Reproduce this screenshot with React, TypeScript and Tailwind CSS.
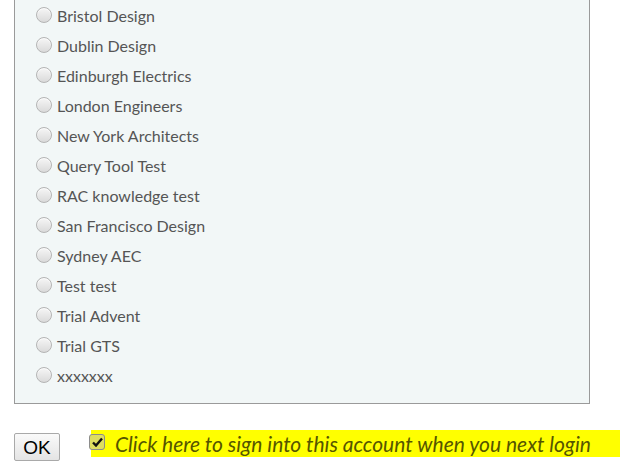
import React from "react";

const items = [
  "Bristol Design",
  "Dublin Design",
  "Edinburgh Electrics",
  "London Engineers",
  "New York Architects",
  "Query Tool Test",
  "RAC knowledge test",
  "San Francisco Design",
  "Sydney AEC",
  "Test test",
  "Trial Advent",
  "Trial GTS",
  "xxxxxxx",
];

function Radio() {
  return (
    <span className="block w-[16px] h-[16px] rounded-full border border-[#b4b4b4] bg-gradient-to-b from-[#f6f6f6] to-[#dadada] shadow-[inset_0_1px_1px_rgba(255,255,255,0.8)]" />
  );
}

export default function App() {
  return (
    <div className="w-[637px] h-[476px] bg-white overflow-hidden" style={{ fontFamily: "Lato, 'Open Sans', sans-serif" }}>
      <div className="ml-[14px] w-[576px] -mt-[20px] border border-[#9a9a9a] bg-[#f2f7f7] pt-[20px] pb-[12px] pl-[21px]">
        {items.map((t) => (
          <div key={t} className="h-[30px] flex items-center gap-[5px]">
            <span className="-mt-[2px]"><Radio /></span>
            <span className="text-[16px] text-[#555]">{t}</span>
          </div>
        ))}
      </div>
      <div className="mt-[25px] flex items-start">
        <button className="ml-[14px] mt-[4px] w-[46px] h-[28px] border border-[#a9a9a9] rounded-[2px] bg-gradient-to-b from-[#fafafa] to-[#e4e4e4] text-[19px] text-black leading-none" style={{ fontFamily: "'Liberation Sans', Arial, sans-serif" }}>
          OK
        </button>
        <div className="relative z-10 ml-[29px] mt-[5px] w-[16px] h-[16px] rounded-[3px] border border-[#8c8c8c] bg-[#dede60] flex items-center justify-center">
          <svg width="11" height="10" viewBox="0 0 11 10">
            <path d="M1 5.5 L4 8.5 L10 1.5" stroke="#111" strokeWidth="2.4" fill="none" />
          </svg>
        </div>
        <div className="-ml-[14px] mt-[1px] pl-[24px] w-[529px] h-[27px] bg-[#ffff00] flex items-center italic text-[21px] text-[#555500] leading-none">
          Click here to sign into this account when you next login
        </div>
      </div>
    </div>
  );
}
